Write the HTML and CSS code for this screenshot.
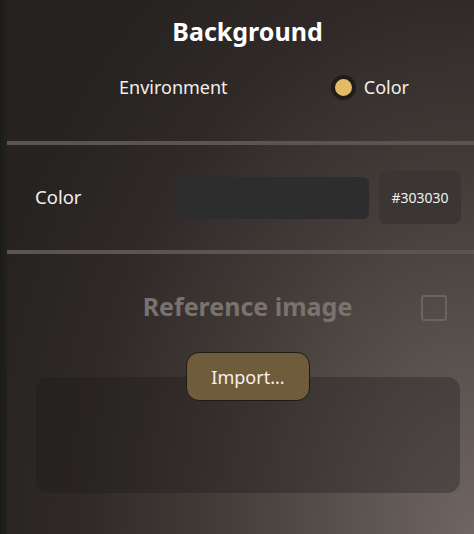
FILE: index.html
```html
<!DOCTYPE html>
<html>
<head>
<meta charset="utf-8">
<link rel="stylesheet" href="styles.css">
</head>
<body>
<div class="app">
  <div class="strip"></div>
  <main class="panel">
    <h1 class="title">Background</h1>
    <div class="mode-row">
      <span class="mode">Environment</span>
      <span class="mode selected"><span class="radio"></span>Color</span>
    </div>
    <div class="divider"></div>
    <div class="color-row">
      <span class="label">Color</span>
      <div class="swatch"></div>
      <div class="hex">#303030</div>
    </div>
    <div class="divider"></div>
    <div class="ref-head">
      <h2 class="ref-title">Reference image</h2>
      <span class="checkbox"></span>
    </div>
    <div class="drop-area">
      <button class="import">Import...</button>
      <div class="drop"></div>
    </div>
  </main>
</div>
</body>
</html>
```
FILE: styles.css
```css
html, body {
  margin: 0;
  padding: 0;
  width: 474px;
  height: 534px;
  overflow: hidden;
}
body {
  font-family: "Noto Sans", "Open Sans", sans-serif;
  color: #f2efed;
}
.app {
  display: flex;
  width: 474px;
  height: 534px;
  background: radial-gradient(ellipse 110% 135% at 100% 100%, #6f6662 0%, #5c5451 22%, #443d3a 48%, #2f2a28 75%, #262220 100%);
}
.strip {
  width: 7px;
  flex: none;
  background: linear-gradient(to right, #1b1b1c, #222121);
}
.panel {
  flex: 1;
  display: flex;
  flex-direction: column;
}
.title {
  margin: 13px 0 0;
  text-align: center;
  font-size: 25px;
  font-weight: 700;
  line-height: 36px;
  padding-left: 14px;
  color: #ffffff;
}
.mode-row {
  display: flex;
  justify-content: space-between;
  align-items: center;
  margin: 23px 0 0;
  padding: 0 65px 0 112px;
  height: 30px;
  font-size: 18px;
}
.mode {
  display: flex;
  align-items: center;
  gap: 8px;
}
.radio {
  width: 17px;
  height: 17px;
  border-radius: 50%;
  background: #e2bb66;
  border: 4px solid #1f1c1b;
  box-sizing: content-box;
  margin-left: -4px;
}
.divider {
  height: 4px;
  background: #5a5553;
  flex: none;
}
.mode-row + .divider {
  margin-top: 39px;
}
.color-row {
  display: flex;
  align-items: center;
  height: 105px;
  padding: 0 13px 0 28px;
}
.label {
  font-size: 18.5px;
  flex: 1;
  margin-top: -3px;
}
.swatch {
  width: 193px;
  height: 42px;
  border-radius: 6px;
  background: #2e2d2d;
  margin-right: 10px;
}
.hex {
  width: 82px;
  height: 53px;
  border-radius: 7px;
  background: #3b3533;
  display: flex;
  align-items: center;
  justify-content: center;
  font-size: 14px;
}
.ref-head {
  position: relative;
  height: 60px;
  margin-top: 22px;
  display: flex;
  align-items: center;
  justify-content: center;
}
.ref-title {
  margin: 0;
  font-size: 25px;
  font-weight: 700;
  color: #79726f;
  padding-left: 14px;
}
.checkbox {
  position: absolute;
  right: 27px;
  top: 19px;
  width: 22px;
  height: 22px;
  border: 2px solid #6a6361;
  border-radius: 3px;
}
.drop-area {
  position: relative;
  margin: 16px 14px 0 29px;
}
.import {
  position: absolute;
  left: 50%;
  top: 0;
  transform: translateX(-50%);
  width: 124px;
  height: 49px;
  background: #6f5c3a;
  border: 1px solid #1e1a14;
  border-radius: 13px;
  color: #f6f2ea;
  font-family: inherit;
  font-size: 18px;
  z-index: 1;
}
.drop {
  margin-top: 25px;
  height: 116px;
  border-radius: 13px;
  background: rgba(30, 26, 25, 0.35);
}
```
